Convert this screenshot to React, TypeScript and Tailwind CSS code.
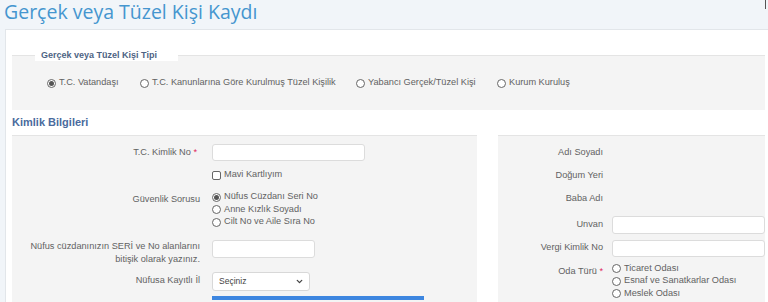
import { ChevronDown } from 'lucide-react';

const font = 'font-["Liberation_Sans",Arial,sans-serif]';

function Radio({ checked = false, label }: { checked?: boolean; label: string }) {
  return (
    <div className="flex items-center gap-[3px] h-[12.5px]">
      <span className="flex h-[9px] w-[9px] items-center justify-center rounded-full border border-[#666] bg-white">
        {checked && <span className="h-[5px] w-[5px] rounded-full bg-[#555]"></span>}
      </span>
      <span>{label}</span>
    </div>
  );
}

function Input({ w, h }: { w: string; h: string }) {
  return <div className={`${w} ${h} rounded-[3px] border border-[#dcdcdc] bg-white`}></div>;
}

export default function App() {
  return (
    <div className={`${font} h-[302px] w-[768px] overflow-hidden bg-[#f1f5f9] text-[9.2px] text-[#626262]`}>
      {/* Page title */}
      <div className="relative h-[29px] pt-[1px]">
        <h1 className='pl-[4px] font-["Open_Sans",sans-serif] text-[19.5px] leading-[22px] font-normal text-[#4596cf]'>
          Gerçek veya Tüzel Kişi Kaydı
        </h1>
        <div className="absolute right-[2px] top-0 h-[9px] w-[1px] bg-[#555]"></div>
      </div>

      {/* White card */}
      <div className="ml-[5px] h-full border-t border-l border-[#e2e6ea] bg-white pl-[6px] pr-[3px] pt-[25px]">
        {/* Kişi tipi fieldset */}
        <div className="relative h-[55px] border-t border-[#e4e4e4] bg-[#f4f4f4]">
          <div className="absolute left-[23px] top-[-7px] bg-white px-[6px] text-[9px] font-bold leading-[12px] text-[#4d6384]">
            Gerçek veya Tüzel Kişi Tipi
            <span className="inline-block w-[15px]"></span>
          </div>
          <div className="flex items-center pl-[35px] pt-[21px]">
            <div className="w-[93px]">
              <Radio checked label="T.C. Vatandaşı" />
            </div>
            <div className="w-[216px]">
              <Radio label="T.C. Kanunlarına Göre Kurulmuş Tüzel Kişilik" />
            </div>
            <div className="w-[141px]">
              <Radio label="Yabancı Gerçek/Tüzel Kişi" />
            </div>
            <Radio label="Kurum Kuruluş" />
          </div>
        </div>

        <div className="pt-[5px] text-[11px] font-bold leading-[14px] text-[#4a6b9d]">Kimlik Bilgileri</div>

        <div className="mt-[6px] flex gap-[21px]">
          {/* Left panel */}
          <div className="h-[200px] w-[465px] border-t border-[#e4e4e4] bg-[#f4f4f4] pt-[8px]">
            <div className="flex h-[17px] items-center">
              <div className="w-[200px] pr-[15px] text-right">
                T.C. Kimlik No <span className="text-[#e0245e]">*</span>
              </div>
              <Input w="w-[153px]" h="h-[17px]" />
            </div>
            <div className="mt-[6px] flex h-[16px] items-center pl-[200px]">
              <span className="mr-[3px] h-[9px] w-[9px] rounded-[2px] border border-[#666] bg-white"></span>
              Mavi Kartlıyım
            </div>
            <div className="mt-[8px] flex">
              <div className="w-[200px] pt-[2px] pr-[12px] text-right leading-[12.5px]">Güvenlik Sorusu</div>
              <div>
                <Radio checked label="Nüfus Cüzdanı Seri No" />
                <Radio label="Anne Kızlık Soyadı" />
                <Radio label="Cilt No ve Aile Sıra No" />
              </div>
            </div>
            <div className="mt-[11.5px] flex">
              <div className="w-[200px] pr-[12px] text-right text-[9.2px] leading-[13px]">
                Nüfus cüzdanınızın SERİ ve No alanlarını
                <br />
                bitişik olarak yazınız.
              </div>
              <Input w="w-[103px]" h="h-[18px]" />
            </div>
            <div className="mt-[5.5px] flex h-[19px] items-center">
              <div className="w-[200px] pr-[12px] text-right">Nüfusa Kayıtlı İl</div>
              <div className="flex h-[19px] w-[98px] items-center justify-between rounded-[3px] border border-[#d8d8d8] bg-white pl-[6px] pr-[5px] text-[8.5px] text-[#444]">
                Seçiniz
                <ChevronDown size={9} strokeWidth={3.5} className="text-[#444]" />
              </div>
            </div>
            <div className="ml-[200px] mt-[5px] h-[4px] w-[212px] bg-[#3d86e0]"></div>
          </div>

          {/* Right panel */}
          <div className="h-[200px] flex-1 border-t border-[#e4e4e4] bg-[#f4f4f4] pt-[5px]">
            <div className="flex h-[23px] items-center">
              <div className="w-[105px] text-right">Adı Soyadı</div>
            </div>
            <div className="flex h-[23px] items-center">
              <div className="w-[105px] text-right">Doğum Yeri</div>
            </div>
            <div className="flex h-[23px] items-center">
              <div className="w-[105px] text-right">Baba Adı</div>
            </div>
            <div className="mt-[5.5px] flex h-[18px] items-center">
              <div className="w-[114px] pr-[9px] text-right">Unvan</div>
              <Input w="w-[153px]" h="h-[18px]" />
            </div>
            <div className="mt-[6px] flex h-[17px] items-center">
              <div className="w-[114px] pr-[9px] text-right">Vergi Kimlik No</div>
              <Input w="w-[153px]" h="h-[17px]" />
            </div>
            <div className="mt-[6px] flex">
              <div className="w-[114px] pr-[9px] pt-[2px] text-right leading-[12px]">
                Oda Türü <span className="text-[#e0245e]">*</span>
              </div>
              <div>
                <Radio label="Ticaret Odası" />
                <Radio label="Esnaf ve Sanatkarlar Odası" />
                <Radio label="Meslek Odası" />
              </div>
            </div>
          </div>
        </div>
      </div>
    </div>
  );
}
